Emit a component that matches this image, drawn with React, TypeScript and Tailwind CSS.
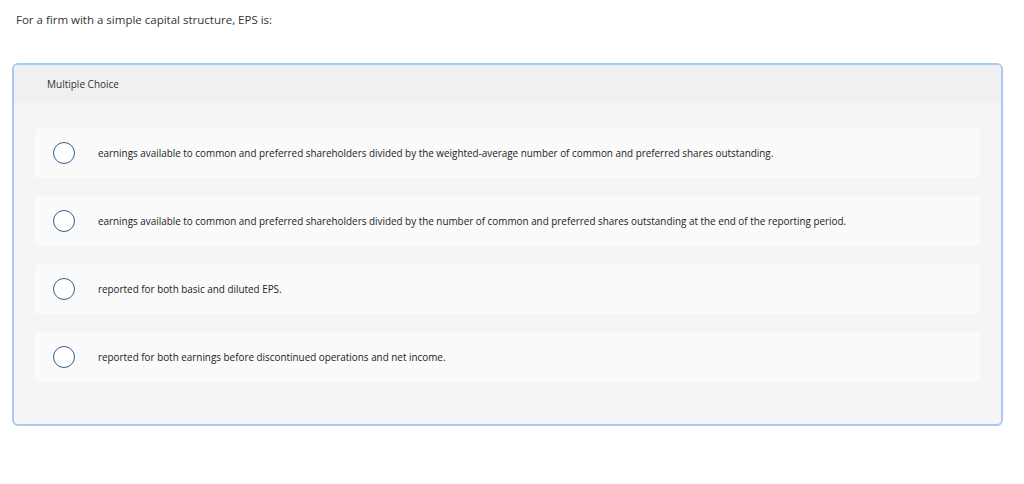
const options = [
  'earnings available to common and preferred shareholders divided by the weighted-average number of common and preferred shares outstanding.',
  'earnings available to common and preferred shareholders divided by the number of common and preferred shares outstanding at the end of the reporting period.',
  'reported for both basic and diluted EPS.',
  'reported for both earnings before discontinued operations and net income.',
];

export default function App() {
  return (
    <div className="min-h-[484px] w-[1024px] bg-white font-['Open_Sans',sans-serif] text-[#333]">
      <div className="px-4 pt-[12px]">
        <p className="text-[11.5px] leading-[16px] text-[#333]">
          For a firm with a simple capital structure, EPS is:
        </p>
      </div>

      <div className="ml-3 mt-[35px] w-[991px] overflow-hidden rounded-md border-2 border-[#a7c9f3] bg-[#f5f5f5]">
        <div className="flex h-[38px] items-center bg-[#f0f0f0] px-[33px]">
          <span className="text-[10px] text-[#333]">Multiple Choice</span>
        </div>

        <div className="flex flex-col gap-[18px] px-[21px] pb-[42px] pt-[25px]">
          {options.map((text) => (
            <label
              key={text}
              className="flex h-[50px] cursor-pointer items-center rounded-sm bg-[#fafafa] pl-[18px]"
            >
              <span className="h-[22px] w-[22px] shrink-0 rounded-full border border-[#2f5f8f] bg-white" />
              <span className="ml-[23px] text-[9.9px] text-[#222]">{text}</span>
            </label>
          ))}
        </div>
      </div>
    </div>
  );
}
